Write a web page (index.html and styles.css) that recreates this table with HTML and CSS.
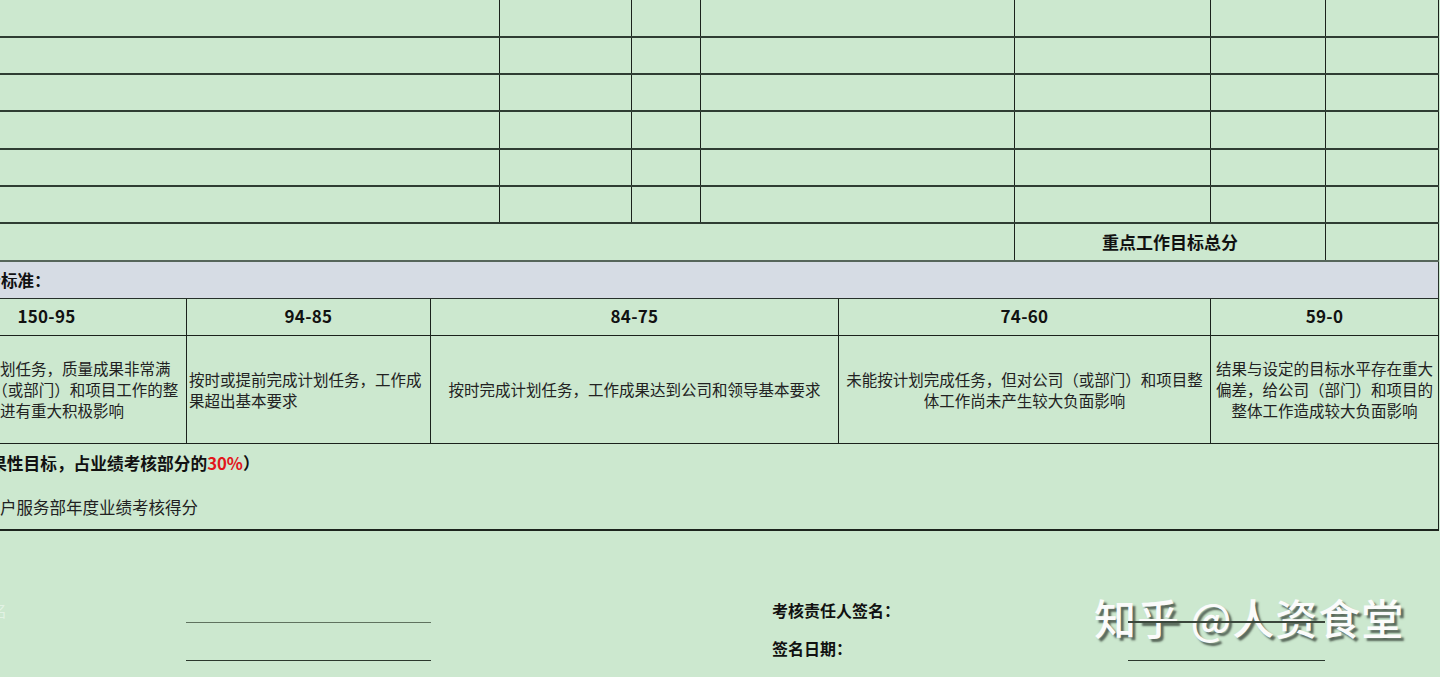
FILE: index.html
```html
<!DOCTYPE html>
<html lang="zh-CN">
<head>
<meta charset="utf-8">
<title>考核表</title>
<link rel="stylesheet" href="styles.css">
</head>
<body>
<div class="sheet">
  <div class="goals">
    <div class="goals-row tall"><div></div><div></div><div></div><div></div><div></div><div></div><div></div></div>
    <div class="goals-row"><div></div><div></div><div></div><div></div><div></div><div></div><div></div></div>
    <div class="goals-row"><div></div><div></div><div></div><div></div><div></div><div></div><div></div></div>
    <div class="goals-row tall"><div></div><div></div><div></div><div></div><div></div><div></div><div></div></div>
    <div class="goals-row"><div></div><div></div><div></div><div></div><div></div><div></div><div></div></div>
    <div class="goals-row"><div></div><div></div><div></div><div></div><div></div><div></div><div></div></div>
    <div class="total-row">
      <div></div>
      <div class="total-label">重点工作目标总分</div>
      <div></div>
    </div>
  </div>

  <div class="std-row">评分标准：</div>

  <div class="criteria">
    <div class="crit-head">150-95</div>
    <div class="crit-head">94-85</div>
    <div class="crit-head">84-75</div>
    <div class="crit-head">74-60</div>
    <div class="crit-head">59-0</div>
    <div class="crit-desc">超额完成计划任务，质量成果非常满<br>意，对公司（或部门）和项目工作的整<br>体推进有重大积极影响</div>
    <div class="crit-desc left">按时或提前完成计划任务，工作成<br>果超出基本要求</div>
    <div class="crit-desc">按时完成计划任务，工作成果达到公司和领导基本要求</div>
    <div class="crit-desc">未能按计划完成任务，但对公司（或部门）和项目整<br>体工作尚未产生较大负面影响</div>
    <div class="crit-desc">结果与设定的目标水平存在重大<br>偏差，给公司（部门）和项目的<br>整体工作造成较大负面影响</div>
  </div>

  <div class="notes">
    <p class="note-strong">结果性目标，占业绩考核部分的<span class="red">30%</span>）</p>
    <p class="note">客户服务部年度业绩考核得分</p>
  </div>

  <div class="sign">
    <div class="ghost">被考核人签名</div>
    <div class="line line-soft"></div>
    <div></div>
    <div class="sign-label">考核责任人签名：</div>
    <div class="line line-over"></div>
    <div></div>

    <div></div>
    <div class="line"></div>
    <div></div>
    <div class="sign-label">签名日期：</div>
    <div class="line"></div>
    <div></div>
  </div>

  <div class="watermark">知乎 @人资食堂</div>
</div>
</body>
</html>
```

FILE: styles.css
```css
* {
  box-sizing: border-box;
  margin: 0;
  padding: 0;
}

html, body {
  width: 1440px;
  height: 677px;
  overflow: hidden;
}

body {
  background: #cce8cf;
  font-family: "Noto Sans CJK SC", "Noto Sans", sans-serif;
  color: #1a1a1a;
}

.sheet {
  position: relative;
  width: 1439px;
}

/* top goals grid */
.goals-row {
  display: grid;
  grid-template-columns: 500px 132px 69px 314px 196px 115px 113px;
  height: 37px;
  border-bottom: 2px solid #2f3d33;
}

.goals-row.tall {
  height: 38px;
}

.goals-row > div {
  border-right: 1px solid #1b221c;
}

.total-row {
  display: grid;
  grid-template-columns: 1015px 311px 113px;
  height: 38px;
  border-bottom: 2px solid #56665a;
}

.total-row > div {
  border-right: 1px solid #1b221c;
}

.total-label {
  display: flex;
  align-items: center;
  justify-content: center;
  padding-bottom: 1px;
  font-size: 17px;
  font-weight: 700;
  color: #111;
}

/* standard label row */
.std-row {
  height: 37px;
  background: #d6dce4;
  border-bottom: 1px solid #26302a;
  border-right: 1px solid #26302a;
  font-size: 16.5px;
  font-weight: 700;
  line-height: 36px;
  color: #111;
  white-space: nowrap;
  padding-left: 1px;
  text-indent: -33px;
}

/* criteria grid */
.criteria {
  margin-left: -93px;
  width: 1532px;
  display: grid;
  grid-template-columns: 280px 244px 408px 372px 228px;
  grid-template-rows: 37px 108px;
}

.criteria > div {
  border-right: 1px solid #1b221c;
  border-bottom: 1px solid #1b221c;
  display: flex;
  align-items: center;
  justify-content: center;
  text-align: center;
  white-space: nowrap;
}

.criteria > .crit-head {
  font-size: 17px;
  font-weight: 700;
  color: #111;
  padding-bottom: 3px;
  letter-spacing: 0.3px;
}

.crit-desc {
  font-size: 15.5px;
  line-height: 21px;
  color: #222;
}

.criteria > .crit-desc.left {
  justify-content: flex-start;
  text-align: left;
  padding-left: 2px;
}

/* notes block */
.notes {
  height: 87px;
  border-bottom: 2px solid #1c241d;
  border-right: 1px solid #1b221c;
  padding-top: 7px;
  white-space: nowrap;
}

.note-strong {
  font-size: 16.7px;
  font-weight: 700;
  line-height: 24px;
  color: #111;
  text-indent: -26.5px;
}

.red {
  color: #e3161b;
}

.note {
  font-size: 16.5px;
  line-height: 24px;
  margin-top: 20px;
  color: #222;
  text-indent: -16.5px;
}

/* signatures */
.sign {
  position: relative;
  z-index: 2;
  display: grid;
  grid-template-columns: 186px 245px 341px 356px 197px 1fr;
  grid-template-rows: 38px 38px;
  margin-top: 54px;
}

.line {
  border-bottom: 1px solid #2b382d;
}

.line-soft {
  border-bottom-color: #5f725f;
}

.line-over {
  border-bottom: 2px solid #3a463b;
}

.sign-label {
  align-self: end;
  font-size: 16px;
  font-weight: 700;
  line-height: 22px;
  padding-bottom: 2px;
  color: #111;
  white-space: nowrap;
}

.ghost {
  align-self: end;
  font-size: 16px;
  line-height: 22px;
  padding-bottom: 2px;
  white-space: nowrap;
  text-indent: -89px;
  color: rgba(255, 255, 255, 0.45);
}

/* watermark overlay */
.watermark {
  position: absolute;
  z-index: 1;
  left: 1094px;
  top: 592px;
  font-size: 42px;
  font-weight: 500;
  letter-spacing: 1px;
  line-height: 50px;
  color: #fbfbfb;
  white-space: nowrap;
  text-shadow: 3px 3px 2px rgba(60, 72, 62, 0.8);
}
```
